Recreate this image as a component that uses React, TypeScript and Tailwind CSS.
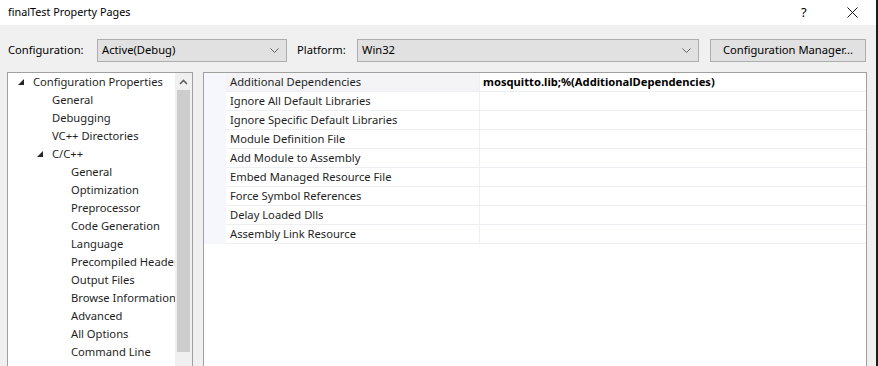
import React from "react";

const font = { fontFamily: '"Segoe UI", "Noto Sans", "Open Sans", sans-serif' };

type TreeItem = { label: string; level: number; open?: boolean };

const tree: TreeItem[] = [
  { label: "Configuration Properties", level: 0, open: true },
  { label: "General", level: 1 },
  { label: "Debugging", level: 1 },
  { label: "VC++ Directories", level: 1 },
  { label: "C/C++", level: 1, open: true },
  { label: "General", level: 2 },
  { label: "Optimization", level: 2 },
  { label: "Preprocessor", level: 2 },
  { label: "Code Generation", level: 2 },
  { label: "Language", level: 2 },
  { label: "Precompiled Headers", level: 2 },
  { label: "Output Files", level: 2 },
  { label: "Browse Information", level: 2 },
  { label: "Advanced", level: 2 },
  { label: "All Options", level: 2 },
  { label: "Command Line", level: 2 },
  { label: "Linker", level: 1, open: true },
];

const props = [
  "Additional Dependencies",
  "Ignore All Default Libraries",
  "Ignore Specific Default Libraries",
  "Module Definition File",
  "Add Module to Assembly",
  "Embed Managed Resource File",
  "Force Symbol References",
  "Delay Loaded Dlls",
  "Assembly Link Resource",
];

function Chevron() {
  return (
    <svg width="9" height="5" viewBox="0 0 9 5" className="shrink-0">
      <polyline points="0.5,0.5 4.5,4.5 8.5,0.5" fill="none" stroke="#606060" strokeWidth="1" />
    </svg>
  );
}

function Expander() {
  return (
    <svg width="6" height="6" viewBox="0 0 6 6" className="shrink-0">
      <polygon points="6,0 6,6 0,6" fill="#262626" />
    </svg>
  );
}

function Dropdown({ value, width }: { value: string; width: string }) {
  return (
    <div
      className={`${width} h-[23px] shrink-0 border border-[#adadad] bg-[#e1e1e1] flex items-center justify-between pl-[4px] pr-[7px] text-[11.2px] text-black`}
    >
      <span>{value}</span>
      <Chevron />
    </div>
  );
}

export default function App() {
  return (
    <div className="w-[878px] h-[366px] overflow-hidden flex bg-[#1b1b1b]" style={font}>
      <div className="w-[876px] h-full bg-[#f0f0f0] flex flex-col">
        {/* title bar */}
        <div className="h-[25px] bg-white flex items-center pl-[8px] text-[10.8px] text-black shrink-0">
          <span className="flex-1">finalTest Property Pages</span>
          <span className="w-[10px] text-[13px] mr-[36px]">?</span>
          <svg width="11" height="11" viewBox="0 0 11 11" className="mr-[18px]">
            <path d="M0.5 0.5 L10.5 10.5 M10.5 0.5 L0.5 10.5" stroke="#111" strokeWidth="1" />
          </svg>
        </div>

        {/* configuration row */}
        <div className="mt-[14px] h-[23px] flex items-center text-[11.2px] text-black shrink-0">
          <span className="w-[97px] shrink-0 pl-[8px]">Configuration:</span>
          <Dropdown value="Active(Debug)" width="w-[190px]" />
          <span className="w-[70px] shrink-0 pl-[10px]">Platform:</span>
          <Dropdown value="Win32" width="w-[342px]" />
          <div className="ml-[11px] w-[156px] shrink-0 h-[23px] border border-[#adadad] bg-[#e1e1e1] flex items-center justify-center">
            Configuration Manager...
          </div>
        </div>

        {/* panels */}
        <div className="mt-[10px] flex flex-1 min-h-0">
          <div className="ml-[7px] w-[186px] shrink-0 border border-[#a0a0a0] bg-white flex h-[320px]">
            <div className="flex-1 min-w-0 overflow-hidden">
              {tree.map((item, i) => (
                <div
                  key={i}
                  className="h-[18px] flex items-center text-[11.2px] text-[#1e1e1e] whitespace-nowrap"
                  style={{ paddingLeft: 9 + item.level * 19 }}
                >
                  <span className="w-[16px] shrink-0 flex items-center pl-[1px]">{item.open ? <Expander /> : null}</span>
                  <span className="shrink-0">{item.label}</span>
                </div>
              ))}
            </div>
            <div className="w-[17px] shrink-0 bg-[#f0f0f0] flex flex-col">
              <div className="h-[17px] flex items-center justify-center">
                <svg width="9" height="6" viewBox="0 0 9 6">
                  <polyline points="1,5 4.5,1.5 8,5" fill="none" stroke="#606060" strokeWidth="1.6" />
                </svg>
              </div>
              <div className="mx-[2px] h-[262px] bg-[#cdcdcd]" />
            </div>
          </div>

          <div className="ml-[10px] w-[664px] shrink-0 border border-[#a0a0a0] bg-white h-[320px]">
            {props.map((name, i) => (
              <div key={name} className="h-[19px] flex text-[11.2px] text-[#1e1e1e]">
                <div className="w-[22px] shrink-0 bg-[#f5f7fc]" />
                <div
                  className={`w-[254px] shrink-0 pl-[4px] flex items-center border-b border-[#eeeff3] border-r ${
                    i === 0 ? "bg-[#f4f4f6]" : ""
                  }`}
                >
                  {name}
                </div>
                <div className="flex-1 pl-[3px] flex items-center border-b border-[#eeeff3] font-bold text-black">
                  {i === 0 ? "mosquitto.lib;%(AdditionalDependencies)" : ""}
                </div>
              </div>
            ))}
          </div>
        </div>
      </div>
    </div>
  );
}
